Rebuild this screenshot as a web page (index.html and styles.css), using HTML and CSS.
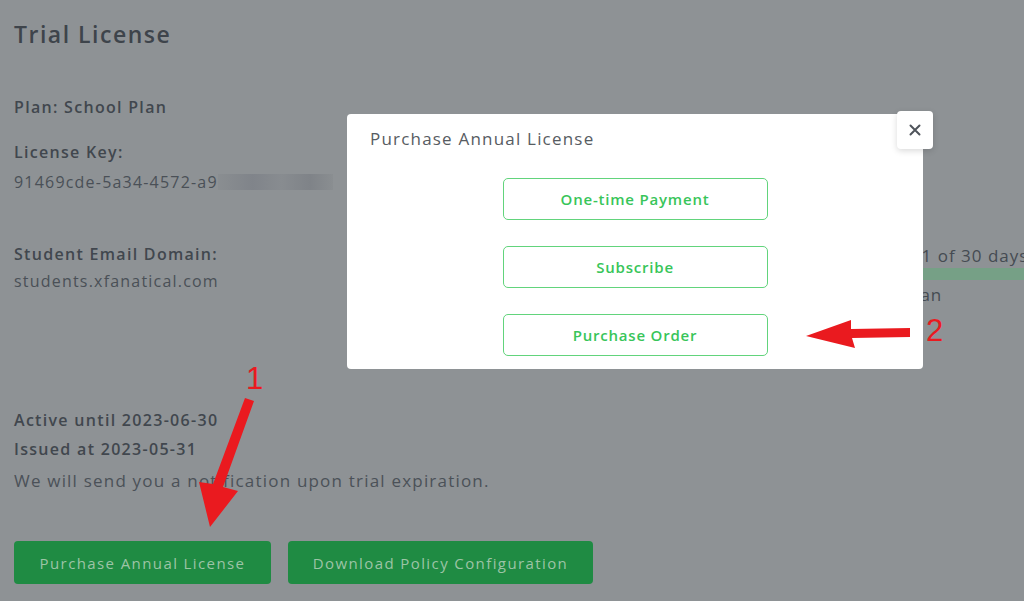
FILE: index.html
```html
<!doctype html>
<html>

<head>
  <meta name="viewport" content="width=device-width, initial-scale=1.0">
  <title>Trial License</title>
  <link rel="stylesheet" href="styles.css">
</head>

<body>

  <div id="page">
    <h1 class="title">Trial License</h1>

    <p class="label plan">Plan: School Plan</p>

    <p class="label key-label">License Key:</p>
    <p class="value">91469cde-5a34-4572-a9<span class="blur"></span></p>

    <div class="row">
      <div>
        <p class="label">Student Email Domain:</p>
        <p class="value">students.xfanatical.com</p>
      </div>
      <div class="usage">
        <p class="usage-text">Day 1 of 30 days</p>
        <div class="bar"><div class="bar-fill" style="width: 4%"></div></div>
        <p class="usage-text usage-plan">Plan</p>
      </div>
    </div>

    <p class="label status">Active until 2023-06-30</p>
    <p class="label">Issued at 2023-05-31</p>
    <p class="note">We will send you a notification upon trial expiration.</p>

    <div class="actions">
      <button class="btn-green">Purchase Annual License</button>
      <button class="btn-green">Download Policy Configuration</button>
    </div>
  </div>

  <div id="purchaseModal" class="modal">
    <button class="modal-close">
      <svg width="12" height="12" viewBox="0 0 12 12">
        <path d="M1.5 1.5 L10.5 10.5 M10.5 1.5 L1.5 10.5" stroke="#4f545b" stroke-width="2" stroke-linecap="round" />
      </svg>
    </button>
    <h3 class="modal-title">Purchase Annual License</h3>
    <div class="modal-options">
      <button class="btn-outline">One-time Payment</button>
      <button class="btn-outline">Subscribe</button>
      <button class="btn-outline">Purchase Order</button>
    </div>
  </div>

  <svg class="marks" width="1024" height="601" viewBox="0 0 1024 601">
    <!-- arrow 1 -->
    <polygon points="245,398 254,401 223,487 238,491 210,527 199,482 213,484" fill="#ea1a1f" />
    <text x="246" y="389" class="mark-num">1</text>
    <!-- arrow 2 -->
    <polygon points="910,328 910,337 852,338 855,348 806,336 851,320 851,329" fill="#ea1a1f" />
    <text x="926" y="341" class="mark-num">2</text>
  </svg>

</body>

</html>
```

FILE: styles.css
```css
* {
  margin: 0;
  padding: 0;
  box-sizing: border-box;
}

html,
body {
  overflow: hidden;
}

body {
  background: #8e9295;
  font-family: "Open Sans", "Liberation Sans", sans-serif;
  color: #41474e;
  width: 1024px;
  height: 601px;
}

#page {
  padding: 19px 14px 0;
}

.title {
  font-size: 23px;
  font-weight: 600;
  color: #3e444b;
  line-height: 30px;
  letter-spacing: 1.5px;
}

.label {
  font-size: 16px;
  font-weight: 600;
  line-height: 29px;
  letter-spacing: 1.3px;
}

.plan {
  margin-top: 44px;
}

.key-label {
  margin-top: 16px;
}

.value {
  font-size: 16px;
  line-height: 31px;
  color: #4a5057;
  letter-spacing: 1.2px;
}

.blur {
  display: inline-block;
  width: 115px;
  height: 16px;
  vertical-align: -2px;
  background: linear-gradient(90deg, #8a8e91, #80848a 30%, #888c90 55%, #7f8388 80%, #8a8e91);
}

.row {
  display: flex;
  margin-top: 43px;
}

.row .label {
  line-height: 27px;
}

.row .value {
  line-height: 27px;
}

.usage {
  margin-left: 664px;
  white-space: nowrap;
  margin-top: 2px;
}

.usage-text {
  font-size: 17px;
  line-height: 25px;
  color: #454b52;
  letter-spacing: 1px;
}

.usage-plan {
  padding-left: 21px;
}

.bar {
  width: 260px;
  height: 12px;
  background: #76a086;
  margin-bottom: 2px;
}

.bar-fill {
  height: 100%;
  background: #1f8b43;
}

.status {
  margin-top: 99px;
}

.note {
  font-size: 17px;
  line-height: 34px;
  color: #4b5158;
  letter-spacing: 1.2px;
}

.actions {
  display: flex;
  gap: 17px;
  margin-top: 43px;
}

.btn-green {
  background: #1f8b43;
  color: #9cc4a6;
  border: none;
  border-radius: 4px;
  height: 43px;
  font-family: inherit;
  font-size: 15px;
  letter-spacing: 1.4px;
}

.btn-green:first-child {
  width: 257px;
}

.btn-green:last-child {
  width: 305px;
}

.modal {
  position: absolute;
  left: 347px;
  top: 114px;
  width: 576px;
  height: 255px;
  background: #fff;
  border-radius: 4px;
  padding: 15px 23px 0;
}

.modal-title {
  font-size: 17px;
  font-weight: 400;
  line-height: 20px;
  color: #575c62;
  letter-spacing: 1.2px;
}

.modal-close {
  position: absolute;
  top: -3px;
  right: -10px;
  width: 36px;
  height: 38px;
  border: none;
  border-radius: 4px;
  background: #fff;
  box-shadow: 0 2px 6px rgba(0, 0, 0, 0.15);
  display: flex;
  align-items: center;
  justify-content: center;
}

.modal-options {
  display: flex;
  flex-direction: column;
  align-items: center;
  gap: 26px;
  margin-top: 29px;
}

.btn-outline {
  width: 265px;
  height: 42px;
  background: #fff;
  border: 1.5px solid #62d47c;
  border-radius: 5px;
  color: #38c55a;
  font-family: inherit;
  font-size: 15px;
  font-weight: 600;
  letter-spacing: 0.8px;
}

.marks {
  position: absolute;
  left: 0;
  top: 0;
  pointer-events: none;
}

.mark-num {
  font-family: "Liberation Sans", sans-serif;
  font-size: 31px;
  fill: #ea1a1f;
}
```
